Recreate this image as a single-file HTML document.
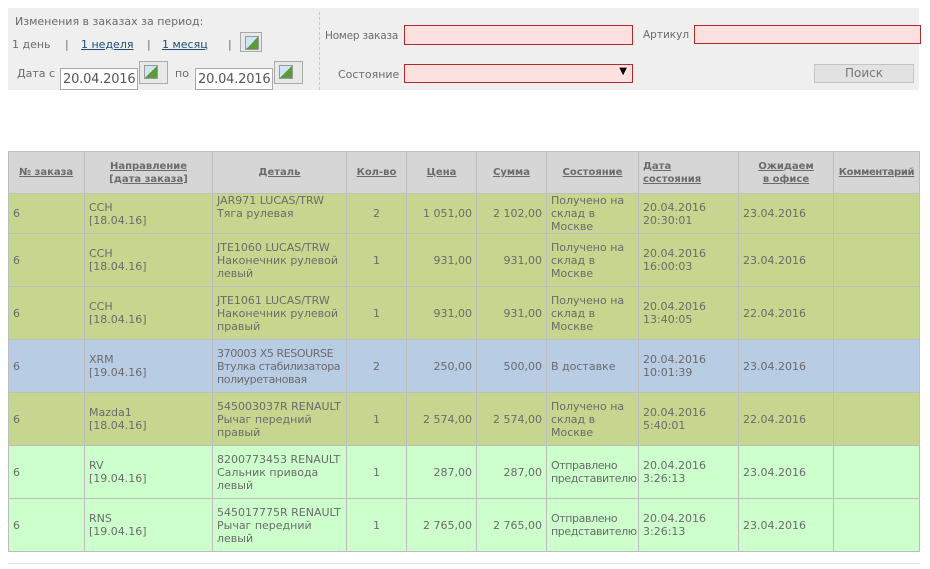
<!DOCTYPE html>
<html><head><meta charset="utf-8"><style>
body{margin:0;width:930px;height:569px;background:#fff;font-family:"DejaVu Sans","Liberation Sans",sans-serif;font-size:11px;color:#6b6b6b;position:relative;overflow:hidden}
.a{position:absolute;white-space:nowrap}
.panel{position:absolute;left:8px;top:8px;width:911px;height:82px;background:#efefef}
.inp{position:absolute;background:#fde0e0;border:1px solid #b02a2a;box-sizing:border-box}
.date{position:absolute;background:#fff;border:1px solid #aaa;box-sizing:border-box;font-size:13px;color:#555;padding:3px 0 0 2px;height:22px;width:78px;letter-spacing:-0.2px}
.img{position:absolute;width:22px;height:20px;border:1px solid #aaa;background:#e8e8e8;box-sizing:border-box}
.img:after{content:"";position:absolute;left:4px;top:3px;width:12px;height:12px;background:linear-gradient(135deg,#cfe4f4 50%,#5a9a3a 50%);border:1px solid #999}
a{color:#1a4f7a;text-decoration:underline}
table{position:absolute;left:8px;top:151px;border-collapse:collapse;table-layout:fixed;width:911px}
td,th{border:1px solid #bdbdbd;padding:0 4px;vertical-align:middle;line-height:13px;font-size:11px;color:#6b6b6b;overflow:hidden;white-space:nowrap}
th{background:#d6d6d6;color:#6b6b6b;font-weight:bold;text-decoration:underline;text-align:center;height:41px;font-size:10px;padding:0 2px}
tr.g td{background:#c6d68f}
tr.b td{background:#b8cce4}
tr.l td{background:#ccffcc}
.c{text-align:center}.r{text-align:right}
.t{letter-spacing:-0.4px}
</style></head><body>
<div class="panel"></div>
<div class="a" style="left:15px;top:15px">Изменения в заказах за период:</div>
<div class="a" style="left:12px;top:38px">1 день</div>
<div class="a" style="left:65px;top:38px">|</div>
<div class="a" style="left:81px;top:38px"><a>1 неделя</a></div>
<div class="a" style="left:147px;top:38px">|</div>
<div class="a" style="left:162px;top:38px"><a>1 месяц</a></div>
<div class="a" style="left:228px;top:38px">|</div>
<div class="img" style="left:240px;top:32px"></div>
<div class="a" style="left:17px;top:67px">Дата с</div>
<div class="date" style="left:60px;top:68px">20.04.2016</div>
<div class="img" style="left:139px;top:61px;width:29px;height:23px"></div>
<div class="a" style="left:175px;top:67px">по</div>
<div class="date" style="left:195px;top:68px">20.04.2016</div>
<div class="img" style="left:274px;top:61px;width:29px;height:23px"></div>
<div style="position:absolute;left:319px;top:12px;height:78px;border-left:1px dashed #c8c8c8"></div>
<div class="a" style="left:325px;top:30px;font-size:10.5px;letter-spacing:-0.2px">Номер заказа</div>
<div class="inp" style="left:404px;top:25px;width:229px;height:20px"></div>
<div class="a" style="left:643px;top:29px;font-size:10.5px">Артикул</div>
<div class="inp" style="left:694px;top:25px;width:227px;height:19px"></div>
<div class="a" style="left:338px;top:68px">Состояние</div>
<div class="inp" style="left:404px;top:64px;width:229px;height:19px"><span style="position:absolute;right:5px;top:1px;color:#000;font-size:10px">▼</span></div>
<div style="position:absolute;left:814px;top:64px;width:100px;height:19px;background:#e2e2e2;border:1px solid #c4c4c4;box-sizing:border-box;text-align:center;font-size:12px;line-height:17px;color:#777">Поиск</div>
<table>
<colgroup><col style="width:76px"><col style="width:128px"><col style="width:134px"><col style="width:60px"><col style="width:70px"><col style="width:70px"><col style="width:92px"><col style="width:100px"><col style="width:95px"><col style="width:86px"></colgroup>
<tr><th style="text-align:left;padding-left:10px">№ заказа</th><th>Направление<br>[дата заказа]</th><th>Деталь</th><th>Кол-во</th><th>Цена</th><th>Сумма</th><th>Состояние</th><th style="text-align:left;padding-left:4px">Дата<br>состояния</th><th>Ожидаем<br>в офисе</th><th style="letter-spacing:-0.3px">Комментарий</th></tr>
<tr class="g" style="height:40px"><td>6</td><td>CCH<br>[18.04.16]</td><td>JAR971 LUCAS/TRW<br>Тяга рулевая<br>&nbsp;</td><td class="c">2</td><td class="r">1 051,00</td><td class="r">2 102,00</td><td>Получено на<br>склад в<br>Москве</td><td>20.04.2016<br>20:30:01</td><td>23.04.2016</td><td></td></tr>
<tr class="g" style="height:53px"><td>6</td><td>CCH<br>[18.04.16]</td><td>JTE1060 LUCAS/TRW<br>Наконечник рулевой<br>левый</td><td class="c">1</td><td class="r">931,00</td><td class="r">931,00</td><td>Получено на<br>склад в<br>Москве</td><td>20.04.2016<br>16:00:03</td><td>23.04.2016</td><td></td></tr>
<tr class="g" style="height:53px"><td>6</td><td>CCH<br>[18.04.16]</td><td>JTE1061 LUCAS/TRW<br>Наконечник рулевой<br>правый</td><td class="c">1</td><td class="r">931,00</td><td class="r">931,00</td><td>Получено на<br>склад в<br>Москве</td><td>20.04.2016<br>13:40:05</td><td>22.04.2016</td><td></td></tr>
<tr class="b" style="height:53px"><td>6</td><td>XRM<br>[19.04.16]</td><td class="t">370003 X5 RESOURSE<br>Втулка стабилизатора<br>полиуретановая</td><td class="c">2</td><td class="r">250,00</td><td class="r">500,00</td><td>В доставке</td><td>20.04.2016<br>10:01:39</td><td>23.04.2016</td><td></td></tr>
<tr class="g" style="height:53px"><td>6</td><td>Mazda1<br>[18.04.16]</td><td>545003037R RENAULT<br>Рычаг передний<br>правый</td><td class="c">1</td><td class="r">2 574,00</td><td class="r">2 574,00</td><td>Получено на<br>склад в<br>Москве</td><td>20.04.2016<br>5:40:01</td><td>22.04.2016</td><td></td></tr>
<tr class="l" style="height:53px"><td>6</td><td>RV<br>[19.04.16]</td><td>8200773453 RENAULT<br>Сальник привода<br>левый</td><td class="c">1</td><td class="r">287,00</td><td class="r">287,00</td><td class="t">Отправлено<br>представителю</td><td>20.04.2016<br>3:26:13</td><td>23.04.2016</td><td></td></tr>
<tr class="l" style="height:53px"><td>6</td><td>RNS<br>[19.04.16]</td><td>545017775R RENAULT<br>Рычаг передний<br>левый</td><td class="c">1</td><td class="r">2 765,00</td><td class="r">2 765,00</td><td class="t">Отправлено<br>представителю</td><td>20.04.2016<br>3:26:13</td><td>23.04.2016</td><td></td></tr>
</table>
<div style="position:absolute;left:8px;top:563px;width:912px;height:1px;background:#e6e6e6"></div>
</body></html>
